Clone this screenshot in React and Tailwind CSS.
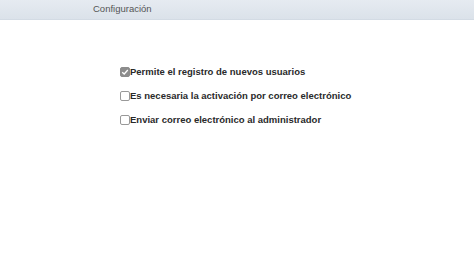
import React from "react";

const options = [
  { label: "Permite el registro de nuevos usuarios", checked: true },
  { label: "Es necesaria la activación por correo electrónico", checked: false },
  { label: "Enviar correo electrónico al administrador", checked: false },
];

function Box({ checked }) {
  return (
    <span
      className={
        "inline-flex items-center justify-center w-[10px] h-[10px] rounded-[2px] border shrink-0 " +
        (checked ? "bg-[#8c8c8c] border-[#8c8c8c]" : "bg-white border-[#999]")
      }
    >
      {checked && (
        <svg viewBox="0 0 10 10" className="w-[8px] h-[8px]" aria-hidden>
          <path d="M1.5 5.2 L4 7.5 L8.5 2.5" fill="none" stroke="#fff" strokeWidth="1.6" />
        </svg>
      )}
    </span>
  );
}

export default function App() {
  return (
    <div className="w-[474px] h-[258px] bg-white" style={{ fontFamily: "'Liberation Sans', Arial, sans-serif" }}>
      <div className="h-[20px] bg-gradient-to-b from-[#e6ebf1] to-[#dbe2ea] border-b border-[#d3dbe4] flex items-center pl-[93px]">
        <span className="text-[9.5px] text-[#555]">Configuración</span>
      </div>
      <div className="pl-[120px] pt-[46px] flex flex-col gap-[12px]">
        {options.map((o) => (
          <label key={o.label} className="flex items-center h-[12px] text-[9.5px] font-bold text-[#2a2a2a]">
            <Box checked={o.checked} />
            <span>{o.label}</span>
          </label>
        ))}
      </div>
    </div>
  );
}
